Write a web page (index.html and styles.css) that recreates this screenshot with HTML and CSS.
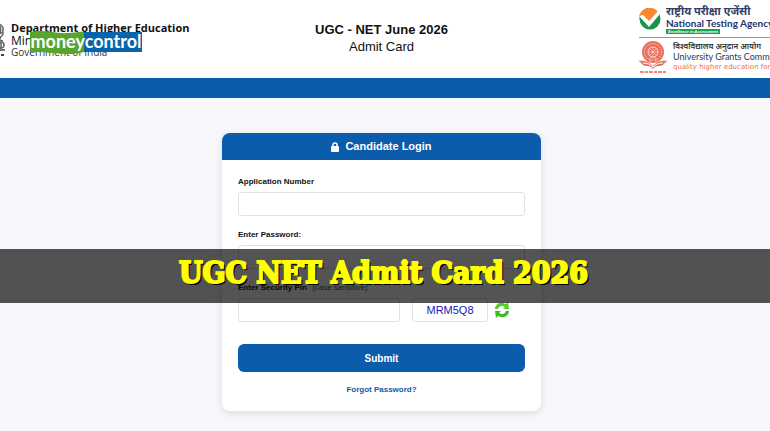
FILE: index.html
```html
<!DOCTYPE html>
<html lang="en">
<head>
<meta charset="utf-8">
<meta name="viewport" content="width=device-width, initial-scale=1">
<title>UGC - NET June 2026 Admit Card</title>
<link rel="stylesheet" href="styles.css">
</head>
<body>
<header class="site-header">
  <div class="department">
    <svg class="emblem" viewBox="0 0 30 40" aria-hidden="true">
      <g fill="none" stroke="#666" stroke-width="1.500">
        <path d="M8 4c6-5 14-3 18 0 4 3 1 5 2 8s-4 3-3 7"/>
        <path d="M20 5c4 1 2 5 5 6M18 11c5 0 4 5 6 8M14 17h11M12 22h14v6H12"/>
        <circle cx="26" cy="24" r="3"/>
        <path d="M22 3c5 2 4 6 3 9M24 13l4-2M22 19l6 1"/>
      </g>
      <path d="M10 29h20" stroke="#777" stroke-width="2"/>
      <path d="M10 34h20" stroke="#444" stroke-width="2" stroke-dasharray="3 1"/>
    </svg>
    <div class="department-text">
      <strong>Department of Higher Education</strong>
      <span class="ministry">Ministry of Education</span>
      <span class="government">Government of India</span>
    </div>
    <div class="watermark">
      <svg class="watermark-shape" viewBox="0 0 112 25" preserveAspectRatio="none" aria-hidden="true">
        <path d="M54 2h58v20H54z" fill="#0865ab"/>
        <path d="M0 2c16-3 24 2 38 1 7 0 11-2 16-1v20c-18 5-32-1-54 0z" fill="#58a52e"/>
      </svg>
      <span class="watermark-text">moneycontrol</span>
    </div>
  </div>
  <div class="exam">
    <h1>UGC - NET June 2026</h1>
    <p>Admit Card</p>
  </div>
  <div class="agencies">
    <div class="agency nta">
      <svg class="nta-logo" viewBox="0 0 22 22" aria-hidden="true">
        <circle cx="11" cy="11" r="10.500" fill="#179447"/>
        <path d="M0 11A10.500 10.500 0 0 1 19 4L10 15 4 8z" fill="#f58a33"/>
        <path d="M0 8l4-1 6 6 9-10 2 3-11 13z" fill="#fff"/>
      </svg>
      <div class="agency-text">
        <span class="nta-hindi" lang="hi">राष्ट्रीय परीक्षा एजेंसी</span>
        <span class="nta-name">National Testing Agency</span>
        <span class="nta-motto">Excellence in Assessment</span>
      </div>
    </div>
    <div class="agency ugc">
      <svg class="ugc-logo" viewBox="0 0 30 34" aria-hidden="true">
        <circle cx="15" cy="12" r="11" fill="#e8705c"/>
        <g fill="none" stroke="#fbd9d2">
          <circle cx="15" cy="12" r="8.500" stroke-dasharray="1 1"/>
          <circle cx="15" cy="12" r="5"/>
          <path d="M15 7v10M10 12h10M11 8l8 8M19 8l-8 8M12 23v-5h6v5" stroke-width=".6"/>
        </g>
        <path d="M0 21c5-1 11 0 15 5 4-5 10-6 15-5-4 1-4 5-8 5-3 0-5 0-7 3-2-3-4-3-7-3-4 0-4-4-8-5z" fill="#e8705c"/>
        <path d="M5 23c4 0 7 1 10 4 3-3 6-4 10-4" fill="none" stroke="#fff"/>
        <path d="M2 32h26" stroke="#ed8a79" stroke-width="2" stroke-dasharray="4 1 3 1"/>
      </svg>
      <div class="agency-text">
        <span class="ugc-hindi" lang="hi">विश्वविद्यालय अनुदान आयोग</span>
        <span class="ugc-name">University Grants Commission</span>
        <span class="ugc-motto">quality higher education for all</span>
      </div>
    </div>
  </div>
</header>
<div class="nav-bar"></div>
<main class="page">
  <form class="card">
    <h2 class="card-title">
      <svg class="lock" viewBox="0 0 8 10" aria-hidden="true"><path d="M2 5V3a2 2 0 0 1 4 0v2" fill="none" stroke="#fff" stroke-width="1.500"/><rect y="4" width="8" height="6" rx="1" fill="#fff"/></svg>
      Candidate Login
    </h2>
    <div class="card-body">
      <div class="field">
        <label for="application">Application Number</label>
        <input id="application" type="text">
      </div>
      <div class="field">
        <label for="password">Enter Password:</label>
        <input id="password" type="password">
      </div>
      <div class="field">
        <label for="pin">Enter Security Pin <span class="hint">(case sensitive)</span></label>
        <div class="pin-row">
          <input id="pin" type="text">
          <span class="captcha">MRM5Q8</span>
          <button class="refresh" type="button" aria-label="Refresh security pin">
            <svg viewBox="0 0 16 16" aria-hidden="true">
              <path d="M1 7c0-4 4-7 8-6l3 1 2-2 1 7H9l2-2C8 3 5 4 4 7z" fill="#58cc27"/>
              <path d="M15 9c0 4-4 7-8 6l-3-1-2 2-1-7h6l-2 2c3 2 6 1 7-2z" fill="#42b91f"/>
            </svg>
          </button>
        </div>
      </div>
      <button class="submit" type="submit">Submit</button>
      <a class="forgot" href="#">Forgot Password?</a>
    </div>
  </form>
</main>
<div class="banner"><span>UGC NET Admit Card 2026</span></div>
</body>
</html>
```
FILE: styles.css
```css
* { box-sizing: border-box; }
body {
  margin: 0;
  min-height: 100vh;
  position: relative;
  overflow: hidden;
  background: #f7f8fb;
  color: #111;
  font-family: "Liberation Sans", Arial, sans-serif;
}
.site-header {
  display: grid;
  grid-template-columns: 1fr auto 1fr;
  height: 78px;
  padding-right: 7px;
  background: #fff;
}
.department {
  position: relative;
  display: flex;
  align-items: flex-start;
  gap: 6px;
  padding-top: 21px;
  font-family: "Open Sans", "Noto Sans", sans-serif;
}
.emblem {
  width: 30px;
  height: 40px;
  margin-left: -25px;
  flex: none;
}
.department-text {
  display: flex;
  flex-direction: column;
  white-space: nowrap;
}
.department-text strong { font-size: 11px; line-height: 14px; }
.ministry { font-size: 12px; line-height: 12px; }
.government { font-size: 10px; line-height: 11px; color: #333; }
.watermark {
  position: absolute;
  left: 30px;
  top: 30px;
  width: 112px;
  height: 25px;
}
.watermark-shape { position: absolute; width: 100%; height: 100%; }
.watermark-text {
  position: relative;
  display: block;
  text-align: center;
  color: #fff;
  font: 700 18px/22px Lato, sans-serif;
}
.exam { padding-top: 21px; text-align: center; }
.exam h1 { margin: 0; font-size: 13px; line-height: 17px; }
.exam p { margin: 0; font-size: 13px; line-height: 17px; }
.agencies {
  justify-self: end;
  width: 124px;
  padding-top: 5px;
  white-space: nowrap;
}
.agency { display: flex; font-family: "Noto Sans", sans-serif; }
.agency-text { display: flex; flex-direction: column; align-items: flex-start; }
.nta { height: 32px; gap: 5px; }
.nta-logo { width: 22px; height: 22px; margin-top: 3px; flex: none; }
.nta-hindi { font-size: 11px; line-height: 12px; font-weight: 700; color: #333d65; }
.nta-name { font: 700 10px/12px Lato, sans-serif; color: #22346b; }
.nta-motto {
  padding: 0 2px;
  background: #16a34a;
  color: #fff;
  font: italic 700 4px/5px "Liberation Sans", sans-serif;
}
.ugc {
  width: 160px;
  gap: 5px;
  padding-top: 2px;
  border-top: 1px solid #999;
}
.ugc-logo { width: 30px; height: 34px; flex: none; margin-left: -1px; }
.ugc-hindi { font-size: 8px; line-height: 12px; font-weight: 600; color: #333; }
.ugc-name { font: 9px/10px Lato, sans-serif; color: #223c61; }
.ugc-motto { font: 7px/10px "DejaVu Sans", sans-serif; color: #e8705c; }
.nav-bar { height: 20px; background: #0b5cab; }
.page { padding: 35px 7px 20px 0; }
.card {
  width: 100%;
  max-width: 319px;
  margin: 0 auto;
  border-radius: 8px;
  background: #fff;
  box-shadow: 0 2px 9px rgba(0, 0, 0, .12);
}
.card-title {
  display: flex;
  align-items: center;
  justify-content: center;
  gap: 6px;
  margin: 0;
  border-radius: 8px 8px 0 0;
  background: #0b5cab;
  color: #fff;
  font-size: 11px;
  line-height: 27px;
}
.lock { width: 8px; height: 10px; }
.card-body { padding: 16px 16px 15px; }
.field { display: flex; flex-direction: column; gap: 4px; margin-bottom: 13px; }
.field label { font-size: 8px; line-height: 12px; font-weight: 700; }
.hint { margin-left: 3px; color: #198754; font-weight: 400; }
input {
  width: 100%;
  height: 24px;
  padding: 0 8px;
  border: 1px solid #dfe1e5;
  border-radius: 3px;
  background: #fff;
  font: 11px "Liberation Sans", sans-serif;
}
.pin-row { display: flex; align-items: center; }
.pin-row input { flex: 0 1 162px; margin-right: 12px; min-width: 0; }
.captcha {
  width: 76px;
  height: 24px;
  border: 1px solid #dfe1e5;
  border-radius: 3px;
  color: #2018b8;
  text-align: center;
  font-size: 11px;
  line-height: 22px;
}
.refresh {
  width: 16px;
  height: 16px;
  margin-left: 6px;
  padding: 0;
  border: 0;
  background: none;
}
.refresh svg { display: block; }
.submit {
  display: block;
  width: 100%;
  height: 28px;
  margin-top: 22px;
  border: 0;
  border-radius: 6px;
  background: #0b5cab;
  color: #fff;
  font: 700 10px "Liberation Sans", sans-serif;
}
.forgot {
  display: block;
  margin-top: 12px;
  color: #0b5cab;
  text-align: center;
  text-decoration: none;
  font-size: 8px;
  line-height: 12px;
  font-weight: 700;
}
.banner {
  position: absolute;
  left: 0;
  right: 0;
  top: 249px;
  height: 54px;
  padding-right: 3px;
  background: rgba(0, 0, 0, .67);
  color: #ff0;
  text-align: center;
  white-space: nowrap;
  font: 700 30px/48px "DejaVu Serif Condensed", "DejaVu Serif", serif;
  -webkit-text-stroke: 2px #ff0;
  text-shadow: 2px 2px 0 #000;
}
```
